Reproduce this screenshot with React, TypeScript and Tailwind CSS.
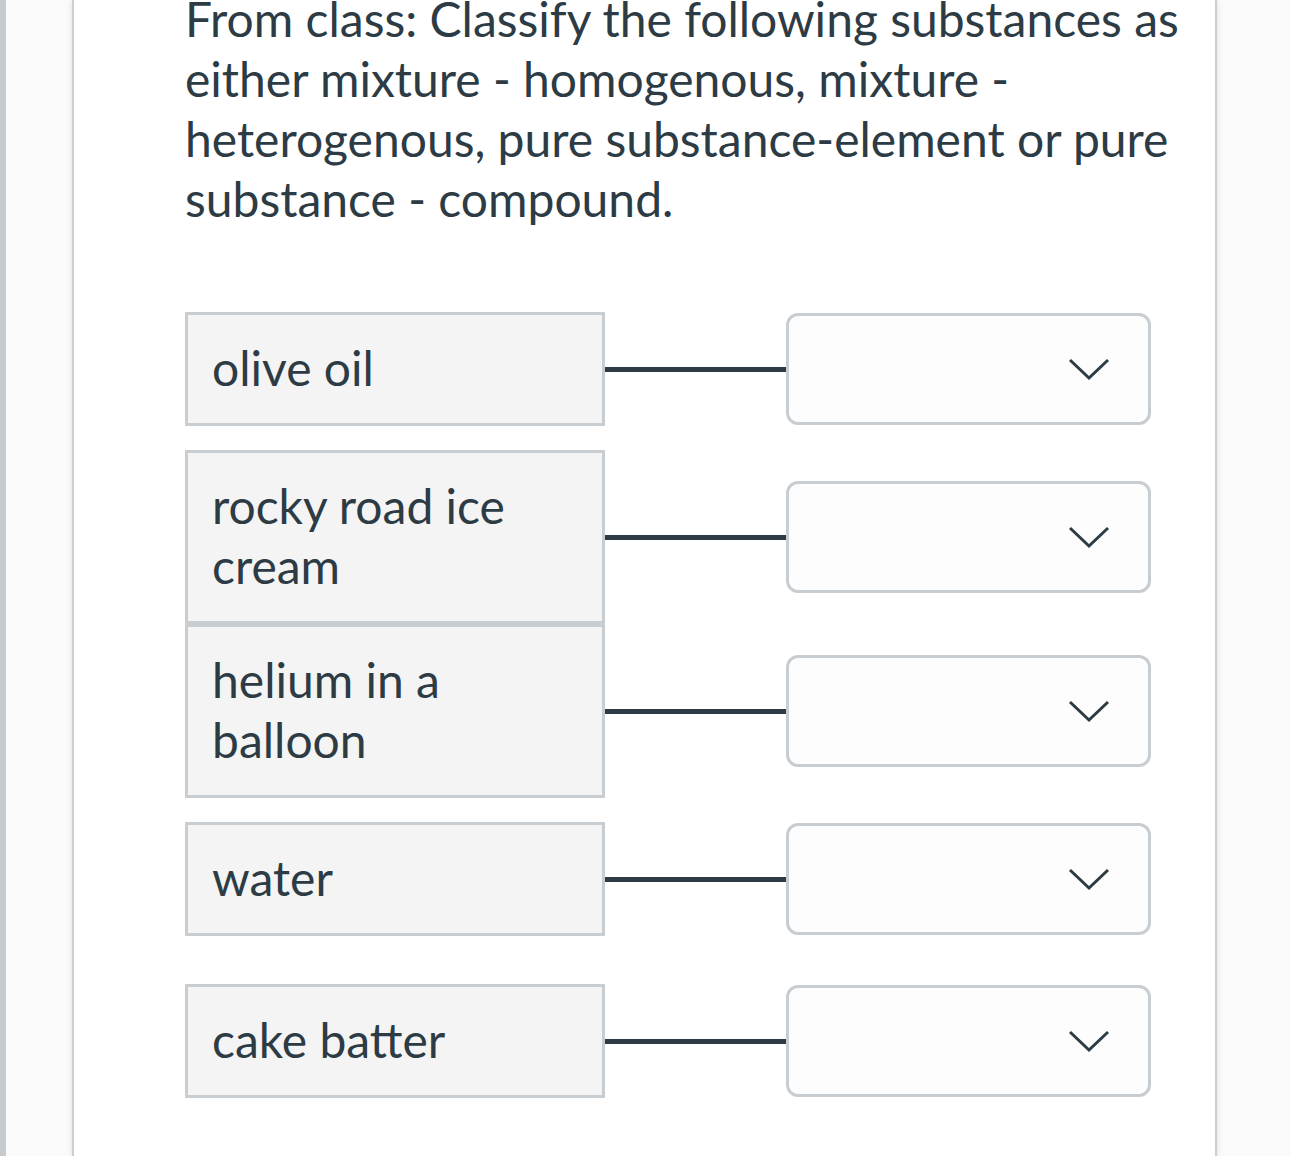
import React from "react";

const Chevron = () => (
  <svg width="42" height="24" viewBox="0 0 42 24" fill="none">
    <polyline points="2,3 21,21 40,3" stroke="#2d3b45" strokeWidth="3" strokeLinecap="butt" strokeLinejoin="miter" />
  </svg>
);

type Row = { lines: string[]; mt: string };

const rows: Row[] = [
  { lines: ["olive oil"], mt: "mt-0" },
  { lines: ["rocky road ice", "cream"], mt: "mt-[24px]" },
  { lines: ["helium in a", "balloon"], mt: "mt-0" },
  { lines: ["water"], mt: "mt-[24px]" },
  { lines: ["cake batter"], mt: "mt-[48px]" },
];

export default function App() {
  return (
    <div
      className="flex h-[1156px] w-[1290px] overflow-hidden bg-[#fafafa] text-[#2d3b45]"
      style={{ fontFamily: "Lato, 'Open Sans', sans-serif" }}
    >
      <div className="w-[6px] shrink-0 bg-[#c7cbd0]" />
      <div className="ml-[66px] w-[1145px] shrink-0 border-x-2 border-[#cbced3] bg-white pl-[111px] shadow-[0_0_5px_rgba(0,0,0,0.12)]">
        <div className="mt-[-11px] text-[48px] leading-[60px]">
          <div className="whitespace-nowrap">From class: Classify the following substances as</div>
          <div className="whitespace-nowrap">either mixture - homogenous, mixture -</div>
          <div className="whitespace-nowrap">heterogenous, pure substance-element or pure</div>
          <div className="whitespace-nowrap">substance - compound.</div>
        </div>
        <div className="mt-[83px] flex w-[966px] flex-col">
          {rows.map((r, i) => (
            <div key={i} className={`flex items-center ${r.mt}`}>
              <div className="w-[420px] shrink-0 border-[3px] border-[#c7cdd1] bg-[#f4f4f4] px-[24px] pt-[23px] pb-[25px] text-[48px] leading-[60px]">
                {r.lines.map((l, j) => (
                  <div key={j} className="whitespace-nowrap">{l}</div>
                ))}
              </div>
              <div className="h-[5px] w-[181px] shrink-0 bg-[#2d3b45]" />
              <div className="flex h-[112px] w-[365px] shrink-0 items-center justify-end rounded-[12px] border-[3px] border-[#c7cdd1] bg-[#fdfdfd] pr-[38px]">
                <Chevron />
              </div>
            </div>
          ))}
        </div>
      </div>
    </div>
  );
}
